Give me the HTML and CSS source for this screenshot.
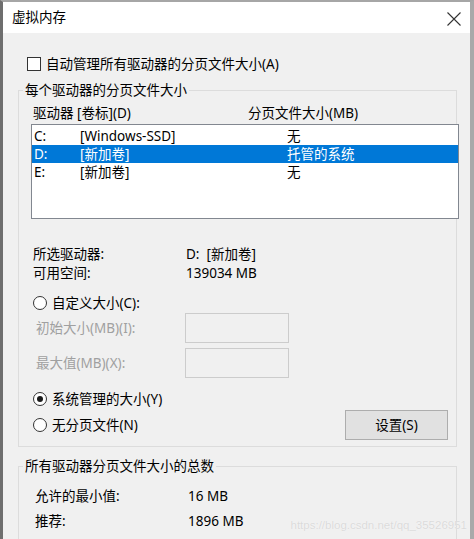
FILE: index.html
```html
<!DOCTYPE html>
<html lang="zh-CN">
<head>
    <meta charset="UTF-8">
    <meta name="viewport" content="width=device-width, initial-scale=1.0">
    <title>虚拟内存</title>
    <link rel="stylesheet" href="styles.css">
</head>
<body>

    <div class="window">

        <!-- Title bar -->
        <div class="titlebar">
            <span class="title">虚拟内存</span>
            <svg class="close" width="14" height="14" viewBox="0 0 14 14">
                <path d="M0.5 0.5 L13.5 13.5 M13.5 0.5 L0.5 13.5" stroke="#333" stroke-width="1.1" fill="none"/>
            </svg>
        </div>

        <div class="content">

            <label class="check-row">
                <span class="checkbox"></span>
                <span>自动管理所有驱动器的分页文件大小(A)</span>
            </label>

            <!-- Per drive -->
            <fieldset class="group">
                <legend>每个驱动器的分页文件大小</legend>

                <div class="list-head">
                    <span>驱动器 [卷标](D)</span>
                    <span>分页文件大小(MB)</span>
                </div>

                <div class="listbox">
                    <div class="row">
                        <span>C:</span><span>[Windows-SSD]</span><span>无</span>
                    </div>
                    <div class="row selected">
                        <span>D:</span><span>[新加卷]</span><span>托管的系统</span>
                    </div>
                    <div class="row">
                        <span>E:</span><span>[新加卷]</span><span>无</span>
                    </div>
                </div>

                <div class="info">
                    <span>所选驱动器:</span><span>D:&nbsp; [新加卷]</span>
                    <span>可用空间:</span><span>139034 MB</span>
                </div>

                <label class="radio-row first">
                    <span class="radio"></span>
                    <span>自定义大小(C):</span>
                </label>

                <div class="size-fields">
                    <span class="disabled">初始大小(MB)(I):</span>
                    <span class="field"></span>
                    <span class="disabled">最大值(MB)(X):</span>
                    <span class="field"></span>
                </div>

                <label class="radio-row system">
                    <span class="radio checked"></span>
                    <span>系统管理的大小(Y)</span>
                </label>

                <div class="button-row">
                    <label class="radio-row">
                        <span class="radio"></span>
                        <span>无分页文件(N)</span>
                    </label>
                    <button class="btn">设置(S)</button>
                </div>
            </fieldset>

            <!-- Totals -->
            <fieldset class="group totals">
                <legend>所有驱动器分页文件大小的总数</legend>
                <div class="total-grid">
                    <span>允许的最小值:</span><span>16 MB</span>
                    <span>推荐:</span><span>1896 MB</span>
                </div>
            </fieldset>

        </div>

        <div class="watermark">https://blog.csdn.net/qq_35526951</div>
    </div>

</body>
</html>
```

FILE: styles.css
```css
* {
    box-sizing: border-box;
}

body {
    margin: 0;
    padding: 0;
    font-family: "Noto Sans", "Noto Sans CJK SC", sans-serif;
    font-size: 13.5px;
    line-height: 18px;
    color: #000;
    background: #f0f0f0;
}

.window {
    position: relative;
    width: 474px;
    height: 539px;
    overflow: hidden;
    background: #f0f0f0;
    border-left: 3px solid #6e6e6e;
    border-top: 2px solid #a6a6a6;
    border-right: 4px solid #a9a9a9;
}

/* Title bar */
.titlebar {
    height: 31px;
    background: #fff;
    display: flex;
    align-items: center;
    justify-content: space-between;
    padding: 0 9px 0 9px;
}

.title {
    margin-top: -2px;
}

.close {
    margin-top: 2px;
    margin-right: 0;
}

.content {
    padding: 22px 13px 0 15px;
}

/* Checkbox */
.check-row {
    display: flex;
    align-items: center;
    gap: 5px;
    padding-left: 9px;
    height: 18px;
}

.checkbox {
    width: 14px;
    height: 14px;
    border: 1px solid #333;
    background: #fff;
}

/* Group boxes */
.group {
    margin: 8px 0 0 0;
    border: 1px solid #dcdcdc;
    padding: 5px 8px 6px 12px;
    min-width: 0;
}

.group legend {
    padding: 0 2px;
    margin-left: -8px;
    line-height: 18px;
}

.list-head {
    display: grid;
    grid-template-columns: 215px 1fr;
    padding-left: 2px;
    height: 18px;
}

.listbox {
    margin-top: 2px;
    margin-right: -11px;
    height: 95px;
    background: #fff;
    border: 1px solid #828790;
    padding-top: 2px;
}

.row {
    display: grid;
    grid-template-columns: 46px 207px 1fr;
    padding-left: 2px;
    height: 18px;
}

.row.selected {
    background: #0078d7;
    color: #fff;
}

.info {
    display: grid;
    grid-template-columns: 153px 1fr;
    row-gap: 1px;
    padding-left: 2px;
    margin-top: 26px;
}

/* Radios */
.radio-row {
    display: flex;
    align-items: center;
    gap: 5px;
    padding-left: 2px;
    height: 18px;
}

.radio-row.first {
    margin-top: 12px;
}

.radio-row.system {
    margin-top: 12px;
}

.radio {
    width: 14px;
    height: 14px;
    border: 1px solid #333;
    border-radius: 50%;
    background: #fff;
    display: flex;
    align-items: center;
    justify-content: center;
}

.radio.checked::after {
    content: "";
    width: 6px;
    height: 6px;
    border-radius: 50%;
    background: #1a1a1a;
}

.size-fields {
    display: grid;
    grid-template-columns: 149px 104px;
    grid-auto-rows: 30px;
    row-gap: 5px;
    align-items: center;
    padding-left: 5px;
    margin-top: 1px;
}

.disabled {
    color: #a0a0a0;
}

.field {
    height: 30px;
    border: 1px solid #cccccc;
    background: #f0f0f0;
}

.button-row {
    display: flex;
    align-items: center;
    justify-content: space-between;
    margin-top: 2px;
}

.btn {
    width: 103px;
    height: 30px;
    font: inherit;
    color: #000;
    background: #e1e1e1;
    border: 1px solid #adadad;
    padding: 0;
}

/* Totals */
.totals {
    margin-top: 10px;
    padding-top: 12px;
    height: 200px;
}

.total-grid {
    display: grid;
    grid-template-columns: 153px 1fr;
    row-gap: 7px;
    padding-left: 4px;
}

.watermark {
    position: absolute;
    right: 3px;
    top: 514px;
    font-family: "Liberation Sans", Arial, sans-serif;
    font-size: 11.5px;
    color: #dadada;
    text-shadow: 0 0 1px #fff;
}
```
